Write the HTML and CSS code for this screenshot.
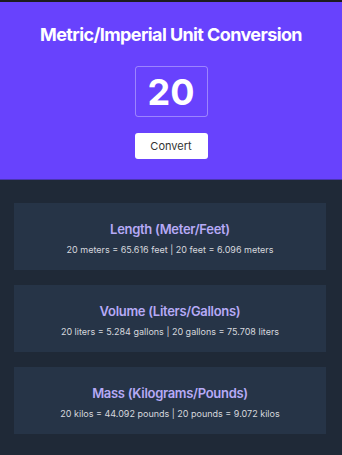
FILE: index.html
```html
<!DOCTYPE html>
<html>
<head>
<meta charset="utf-8">
<link rel="stylesheet" href="styles.css">
</head>
<body>
<div class="page">
  <header class="hero">
    <h1 class="hero-title">Metric/Imperial Unit Conversion</h1>
    <div class="value-box">20</div>
    <button class="convert-btn">Convert</button>
  </header>
  <main class="results">
    <section class="card">
      <h2 class="card-title">Length (Meter/Feet)</h2>
      <p class="card-text">20 meters = 65.616 feet | 20 feet = 6.096 meters</p>
    </section>
    <section class="card">
      <h2 class="card-title">Volume (Liters/Gallons)</h2>
      <p class="card-text">20 liters = 5.284 gallons | 20 gallons = 75.708 liters</p>
    </section>
    <section class="card">
      <h2 class="card-title">Mass (Kilograms/Pounds)</h2>
      <p class="card-text">20 kilos = 44.092 pounds | 20 pounds = 9.072 kilos</p>
    </section>
  </main>
</div>
</body>
</html>
```
FILE: styles.css
```css
* { box-sizing: border-box; }
html, body { margin: 0; padding: 0; }
body {
  background: #1f2937;
  font-family: Inter, "Noto Sans", sans-serif;
  border-top: 2px solid #1c1c1e;
}
.page { display: flex; flex-direction: column; }
.hero {
  background: #6842fd;
  height: 178px;
  border-bottom: 1px solid #4a35b0;
  display: flex;
  flex-direction: column;
  align-items: center;
  padding-top: 22px;
}
.hero-title {
  margin: 0;
  color: #ffffff;
  font-size: 18px;
  font-weight: 700;
  letter-spacing: -0.6px;
  line-height: 22px;
}
.value-box {
  margin-top: 20px;
  width: 73px;
  height: 51px;
  border: 1px solid rgba(255,255,255,0.35);
  border-radius: 3px;
  color: #fff;
  font-size: 36px;
  font-weight: 700;
  display: flex;
  align-items: center;
  justify-content: center;
}
.convert-btn {
  margin-top: 16px;
  width: 73px;
  height: 26px;
  border: none;
  border-radius: 3px;
  background: #fff;
  color: #333;
  font-family: Inter, "Noto Sans", sans-serif;
  font-size: 11px;
  padding: 0;
}
.results {
  display: flex;
  flex-direction: column;
  gap: 15px;
  padding: 23px 16px 20px 14px;
}
.card {
  background: #263447;
  height: 67px;
  display: flex;
  flex-direction: column;
  align-items: center;
  padding-top: 18px;
}
.card-title {
  margin: 0;
  color: #b6aaf6;
  font-size: 13px;
  font-weight: 600;
  letter-spacing: -0.3px;
  line-height: 17px;
}
.card-text {
  margin: 6px 0 0;
  color: #d6d8de;
  font-size: 9px;
  line-height: 12px;
}
```
